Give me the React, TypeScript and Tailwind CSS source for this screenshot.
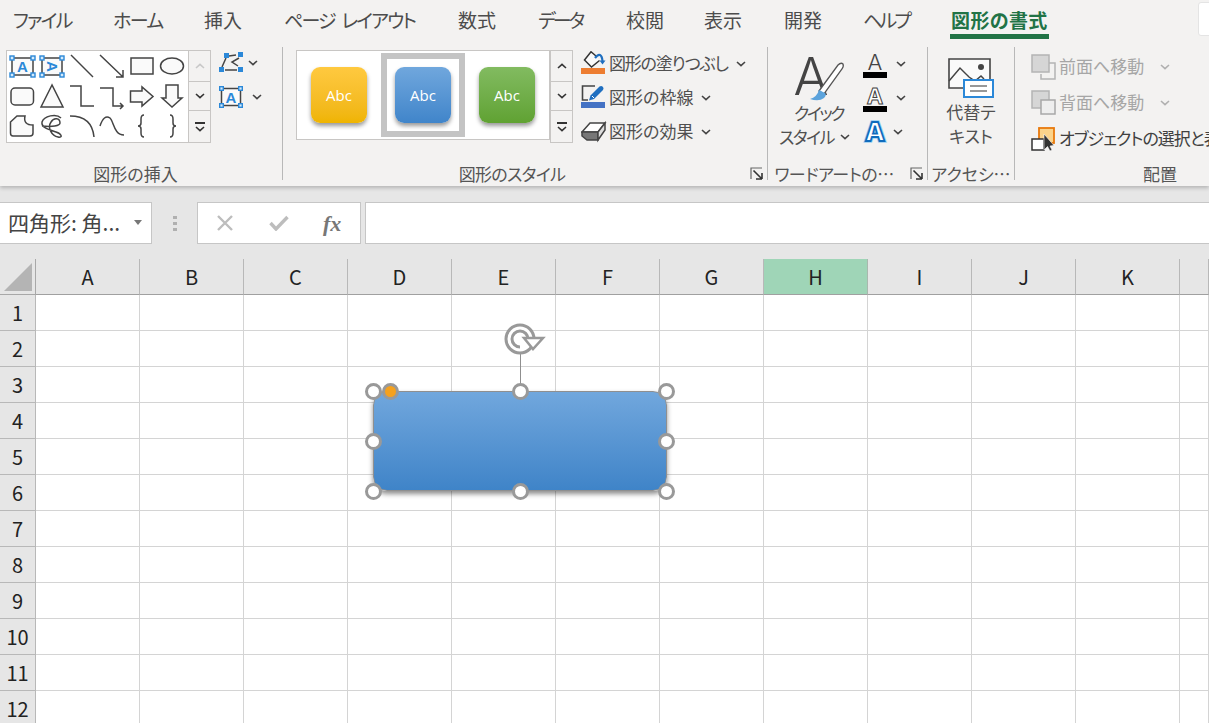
import React from "react";

const JP = "font-['Noto_Sans_CJK_JP','Noto_Sans',sans-serif] [font-feature-settings:'palt']";

const tabs = [
  { t: "ファイル", c: "w-[100px] tracking-[-1.8px]" },
  { t: "ホーム", c: "w-[91px] tracking-[-1.6px]" },
  { t: "挿入", c: "w-[80px]" },
  { t: "ページ レイアウト", c: "w-[174px] tracking-[-1.8px] [word-spacing:4px]" },
  { t: "数式", c: "w-[80px]" },
  { t: "データ", c: "w-[88px] tracking-[-3px]" },
  { t: "校閲", c: "w-[78px]" },
  { t: "表示", c: "w-[80px]" },
  { t: "開発", c: "w-[79px]" },
  { t: "ヘルプ", c: "w-[88px] tracking-[-2.8px]" },
];

function Chev({ c = "#444", className = "" }: { c?: string; className?: string }) {
  return (
    <svg width="10" height="6" viewBox="0 0 10 6" className={className}>
      <path d="M1 1l4 3.6L9 1" fill="none" stroke={c} strokeWidth="1.6" />
    </svg>
  );
}

function ScrollBtns({ dim = false }: { dim?: boolean }) {
  return (
    <div className="flex flex-col w-[23px] h-[93px] shrink-0">
      <div className="h-[32px] border border-[#c8c6c4] flex items-center justify-center">
        <svg width="10" height="6" viewBox="0 0 10 6"><path d="M1 5l4-3.6L9 5" fill="none" stroke={dim ? "#c8c8c8" : "#333"} strokeWidth="1.6" /></svg>
      </div>
      <div className="h-[29px] border border-t-0 border-[#c8c6c4] flex items-center justify-center">
        <Chev c="#333" />
      </div>
      <div className="h-[32px] border border-t-0 border-[#c8c6c4] flex flex-col gap-[2px] items-center justify-center">
        <div className="w-[10px] h-[2px] bg-[#333]" />
        <Chev c="#333" />
      </div>
    </div>
  );
}

function ShapesIcons() {
  const s = { fill: "#fafafa", stroke: "#444", strokeWidth: 1.5 };
  const l = { fill: "none", stroke: "#444", strokeWidth: 1.5 };
  const h = (x: number, y: number) => <rect key={x + "-" + y} x={x - 2} y={y - 2} width="4" height="4" fill="#d6ecfb" stroke="#2b88d8" strokeWidth="1.4" />;
  return (
    <svg width="181" height="91" viewBox="7 51 181 91" className="block">
      <rect x="12" y="58" width="21" height="17" fill="#fafafa" stroke="#444" strokeWidth="1.5" />
      {[h(12, 58), h(33, 58), h(12, 75), h(33, 75)]}
      <text x="22.5" y="72" textAnchor="middle" fontSize="15" fontWeight="700" fill="#2b88d8" fontFamily="Liberation Sans">A</text>
      <rect x="42" y="58" width="20" height="17" fill="#fafafa" stroke="#444" strokeWidth="1.5" />
      {[h(42, 58), h(62, 58), h(42, 75), h(62, 75)]}
      <text x="0" y="0" textAnchor="middle" fontSize="15" fontWeight="700" fill="#2b88d8" fontFamily="Liberation Sans" transform="translate(47 66.5) rotate(90)">A</text>
      <path d="M71 55L93 77" {...l} />
      <path d="M100 55L123 77M123 70v7h-7" {...l} />
      <rect x="131" y="58" width="22" height="16" {...s} />
      <ellipse cx="172" cy="66" rx="11.5" ry="8" {...s} />
      <rect x="11" y="88" width="22.5" height="17" rx="4" {...s} />
      <path d="M52 85L41 107H63Z" {...s} />
      <path d="M70 86H81V106H94" {...l} />
      <path d="M100 88H113V106H123M120 103l3 3-3 3" {...l} />
      <path d="M130.500 91H142V87L153 96.500L142 106V102H130.500Z" {...s} />
      <path d="M166 85H178V98H182L172 107L162 98H166Z" {...s} />
      <path d="M10.500 122L17 116H25Q23 125 33 125V133Q33 136 30 136H13Q10.500 136 10.500 133Z" {...s} />
      <path d="M61 118C56 113 44 116 42 122C41 128 50 130 56 132C62 134 63 138 58 137C52 136 47 128 51 122C54 117 60 118 60 123C60 126 52 127 42 126" {...l} />
      <path d="M70 116Q92 116 94 137" {...l} />
      <path d="M100 126Q104 114 110 118C114 122 114 135 124 135" {...l} />
      <path d="M144 115Q141 115 141 119V123Q141 126 138 126Q141 126 141 129V133Q141 137 144 137" {...l} />
      <path d="M170 115Q173 115 173 119V123Q173 126 176 126Q173 126 173 129V133Q173 137 170 137" {...l} />
    </svg>
  );
}

function Thumb({ c, sel }: { c: string; sel?: boolean }) {
  return (
    <div className={"w-[84px] h-[84px] shrink-0 flex items-center justify-center " + (sel ? "border-[6px] border-[#c4c4c4]" : "border-[6px] border-transparent")}>
      <div className={"w-[56px] h-[56px] rounded-[9px] shadow-[0_3px_4px_rgba(0,0,0,0.4)] flex items-center justify-center text-white text-[15px] font-['Open_Sans',sans-serif] " + c}>
        Abc
      </div>
    </div>
  );
}

function Launcher() {
  return (
    <svg width="13" height="13" viewBox="0 0 13 13" className="block">
      <path d="M1 12V1h11" fill="none" stroke="#666" strokeWidth="1.2" />
      <path d="M12 12H6M12 12V6M12 12L3.500 3.500" fill="none" stroke="#333" strokeWidth="1.6" />
    </svg>
  );
}

function Cmd({ icon, label, dim, tc = "" }: { icon: React.ReactNode; label: string; dim?: boolean; tc?: string }) {
  return (
    <div className="h-[34px] flex items-center">
      <div className="w-[28px] shrink-0">{icon}</div>
      <span className={"text-[17px] leading-[32px] -mt-[2px] whitespace-nowrap " + tc + (dim ? " text-[#a6a6a6]" : " text-[#505050]")}>{label}</span>
      <Chev c={dim ? "#b0b0b0" : "#444"} className={dim ? "ml-[16px] shrink-0" : "ml-[8px] shrink-0"} />
    </div>
  );
}

const PaintIcon = (
  <svg width="26" height="26" viewBox="0 0 26 26" className="block">
    <path d="M15 5L10 0.800L3.500 9L10.500 16L18.500 9.500" fill="#fafafa" stroke="#333" strokeWidth="1.5" />
    <path d="M14 7Q17 3 19 4Q21 5 21.500 10" fill="none" stroke="#1f6fc0" strokeWidth="2.200" />
    <path d="M18.500 9.500h6l-3 4z" fill="#1f6fc0" />
    <rect x="0" y="17" width="24" height="6" fill="#ed7d31" />
  </svg>
);
const PenIcon = (
  <svg width="26" height="26" viewBox="0 0 26 26" className="block">
    <path d="M14 1H1.500V15H7" fill="none" stroke="#444" strokeWidth="1.6" />
    <path d="M8 15.500l1.500-5L18.500 1.500a2.500 2.500 0 0 1 3.500 3.500L13 14z" fill="#1f6fc0" />
    <path d="M11 11l2 2" stroke="#fff" strokeWidth="1" />
    <rect x="0" y="17" width="24" height="6" fill="#4472c4" />
  </svg>
);
const EraserIcon = (
  <svg width="26" height="22" viewBox="0 0 26 22" className="block">
    <path d="M1 11L9 2H24L17 11Z" fill="#fff" stroke="#444" strokeWidth="1.5" />
    <path d="M1 11V15L6 19H17V11H1Z" fill="#777" stroke="#444" strokeWidth="1.5" />
    <path d="M17 11L24 2V9L17 19Z" fill="#ddd" stroke="#444" strokeWidth="1.5" />
  </svg>
);

function Label({ children, launcher }: { children: React.ReactNode; launcher?: boolean }) {
  return (
    <div className="h-[14px] relative flex justify-center text-[17px] leading-[16px] text-[#555] whitespace-nowrap">
      {children}
      {launcher && (
        <div className="absolute right-[4px] top-[1px]">
          <Launcher />
        </div>
      )}
    </div>
  );
}

function Ribbon() {
  return (
    <div className="h-[186px] bg-[#f3f2f1] relative z-10 shadow-[0_2px_4px_rgba(0,0,0,0.22)] overflow-hidden">
      <div className="h-[47px] flex pl-[13px] text-[19px] text-[#4c4c4c] relative">
        {tabs.map((t) => (
          <div key={t.t} className={"h-[40px] leading-[40px] whitespace-nowrap shrink-0 " + t.c}>{t.t}</div>
        ))}
        <div className="h-[39px] leading-[40px] font-bold text-[#217346] border-b-[5px] border-[#217346] whitespace-nowrap tracking-[0.4px] px-[1px] -ml-[1px]">図形の書式</div>
        <div className="absolute left-[1198px] top-[2px] w-[20px] h-[34px] bg-white border border-[#e4e4e4] rounded-[3px]" />
      </div>

      <div className="flex h-[133px]">
        {/* 図形の挿入 */}
        <div className="w-[283px] shrink-0 border-r border-[#b8b8b8] flex flex-col">
          <div className="h-[119px] pl-[6px] pt-[3px] flex">
            <div className="w-[182px] h-[93px] shrink-0 bg-white border border-[#c8c6c4] border-r-0">
              <ShapesIcons />
            </div>
            <ScrollBtns dim />
            <div className="ml-[8px] flex flex-col pt-[2px] gap-[13px]">
              <div className="flex items-center gap-[3px]">
                <svg width="26" height="21" viewBox="0 0 26 21" className="block">
                  <path d="M3 15L7 6M10 4L17 3M20 6L13 10L19 14M6 18H18" fill="none" stroke="#444" strokeWidth="1.500" />
                  {[[0, 15], [5, 1], [19, 0], [19, 15]].map(([x, y]) => (
                    <rect key={x + "-" + y} x={x} y={y} width="5" height="5" fill="#2b88d8" />
                  ))}
                </svg>
                <Chev />
              </div>
              <div className="flex items-center gap-[9px]">
                <svg width="24" height="22" viewBox="0 0 24 22" className="block">
                  <rect x="2.500" y="2.500" width="19" height="17" fill="#fafafa" stroke="#444" strokeWidth="1.500" />
                  <text x="12" y="17" textAnchor="middle" fontSize="15" fontWeight="700" fill="#2b88d8" fontFamily="Liberation Sans">A</text>
                  {[[0, 0], [19, 0], [0, 17], [19, 17]].map(([x, y]) => (
                    <rect key={x + "-" + y} x={x + 0.7} y={y + 0.7} width="3.600" height="3.600" fill="#d6ecfb" stroke="#2b88d8" strokeWidth="1.400" />
                  ))}
                </svg>
                <Chev />
              </div>
            </div>
          </div>
          <Label><span className="pr-[11px]">図形の挿入</span></Label>
        </div>

        {/* 図形のスタイル */}
        <div className="w-[485px] shrink-0 border-r border-[#b8b8b8] flex flex-col">
          <div className="h-[119px] pl-[13px] pt-[3px] flex">
            <div className="w-[254px] h-[90px] shrink-0 bg-white border border-[#c8c6c4] flex items-center overflow-hidden">
              <Thumb c="bg-gradient-to-b from-[#ffc93f] to-[#efb400]" />
              <Thumb c="bg-gradient-to-b from-[#70a7dd] to-[#4085ca]" sel />
              <Thumb c="bg-gradient-to-b from-[#82bb60] to-[#60a232]" />
            </div>
            <ScrollBtns />
            <div className="ml-[8px] -mt-[3px] flex flex-col">
              <Cmd icon={PaintIcon} label="図形の塗りつぶし" tc="tracking-[-1.2px]" />
              <Cmd icon={PenIcon} label="図形の枠線" />
              <Cmd icon={EraserIcon} label="図形の効果" />
            </div>
          </div>
          <Label launcher><span className="pr-[26px] tracking-[-0.7px]">図形のスタイル</span></Label>
        </div>

        {/* ワードアート */}
        <div className="w-[160px] shrink-0 border-r border-[#b8b8b8] flex flex-col">
          <div className="h-[119px] flex">
            <div className="w-[93px] flex flex-col items-center">
              <svg width="56" height="50" viewBox="0 0 56 50" className="block mt-[6px] ml-[7px] overflow-visible">
                <text x="21" y="42" textAnchor="middle" fontSize="52" fontWeight="300" fill="#444" fontFamily="Inter">A</text>
                <path d="M29 38L48 12q3-3 5-1 1 2-1 5L34 41z" fill="#fff" stroke="#555" strokeWidth="1.300" />
                <path d="M29 37q-2 7-9 9 9 3 14-1 3-3 1-5z" fill="#5ba3dc" />
              </svg>
              <div className="text-[17px] leading-[24px] text-[#505050] -mt-[2px] pl-[8px] tracking-[-2.5px] whitespace-nowrap">クイック</div>
              <div className="text-[17px] leading-[24px] text-[#505050] whitespace-nowrap flex items-center gap-[6px]"><span className="tracking-[-1.5px]">スタイル</span><Chev /></div>
            </div>
            <div className="flex flex-col ml-[2px]">
              <div className="h-[34px] flex items-center">
                <svg width="26" height="28" viewBox="0 0 26 28" className="block mt-[2px] overflow-visible">
                  <text x="12" y="19" textAnchor="middle" fontSize="22" fontWeight="300" fill="#444" fontFamily="Inter">A</text>
                  <rect x="0" y="21" width="24" height="6" fill="#000" />
                </svg>
                <Chev className="ml-[7px]" />
              </div>
              <div className="h-[34px] flex items-center">
                <svg width="26" height="28" viewBox="0 0 26 28" className="block mt-[2px] overflow-visible">
                  <text x="12" y="19" textAnchor="middle" fontSize="22" fontWeight="700" fill="#fff" stroke="#444" strokeWidth="1" fontFamily="Inter">A</text>
                  <rect x="0" y="21" width="24" height="6" fill="#000" />
                </svg>
                <Chev className="ml-[7px]" />
              </div>
              <div className="h-[34px] flex items-center">
                <svg width="26" height="26" viewBox="0 0 26 26" className="block overflow-visible">
                  <text x="12" y="22" textAnchor="middle" fontSize="26" fontWeight="800" fill="#fff" stroke="#9fd0f2" strokeWidth="3.500" fontFamily="Inter">A</text>
                  <text x="12" y="22" textAnchor="middle" fontSize="26" fontWeight="800" fill="#fff" stroke="#0f6cbd" strokeWidth="1.800" fontFamily="Inter">A</text>
                </svg>
                <Chev className="ml-[4px]" />
              </div>
            </div>
          </div>
          <Label launcher><span className="pr-[27px] tracking-[-0.5px]">ワードアートの…</span></Label>
        </div>

        {/* アクセシビリティ */}
        <div className="w-[87px] shrink-0 border-r border-[#b8b8b8] flex flex-col">
          <div className="h-[119px] flex flex-col items-center">
            <svg width="46" height="42" viewBox="0 0 46 42" className="block mt-[10px]">
              <path d="M15 31H1V2H42V22" fill="#fafafa" stroke="#444" strokeWidth="1.600" />
              <path d="M1 24L12 11L21 20L27 24L33 19L36 22" fill="none" stroke="#444" strokeWidth="1.500" />
              <circle cx="33" cy="10" r="3" fill="#444" />
              <rect x="16" y="23" width="29" height="17" fill="#fff" stroke="#2b88d8" strokeWidth="2" />
              <path d="M22 29H39M22 34H39" stroke="#777" strokeWidth="1.500" />
            </svg>
            <div className="text-[17px] leading-[24px] text-[#505050] mt-[1px] whitespace-nowrap">代替テ</div>
            <div className="text-[17px] leading-[24px] text-[#505050] whitespace-nowrap">キスト</div>
          </div>
          <Label>アクセシ…</Label>
        </div>

        {/* 配置 */}
        <div className="flex-1 min-w-0 flex flex-col">
          <div className="h-[119px] pl-[16px] pt-[3px] flex flex-col">
            <div className="h-[36px]">
              <Cmd dim label="前面へ移動" icon={
                <svg width="26" height="26" viewBox="0 0 26 26" className="block">
                  <path d="M12 9H24V25H10V20" fill="none" stroke="#b4b4b4" strokeWidth="1.500" />
                  <rect x="1" y="1" width="17" height="17" fill="#d6d6d6" stroke="#b4b4b4" strokeWidth="1.500" />
                </svg>
              } />
            </div>
            <div className="h-[36px]">
              <Cmd dim label="背面へ移動" icon={
                <svg width="26" height="26" viewBox="0 0 26 26" className="block">
                  <rect x="1" y="1" width="17" height="17" fill="#d6d6d6" stroke="#b4b4b4" strokeWidth="1.500" />
                  <rect x="10" y="10" width="14" height="14" fill="#eee" stroke="#a8a8a8" strokeWidth="1.500" />
                </svg>
              } />
            </div>
            <div className="h-[34px] flex items-center">
              <div className="w-[28px] shrink-0">
                <svg width="26" height="26" viewBox="0 0 26 26" className="block">
                  <rect x="8" y="2" width="15" height="15" fill="#fbd38a" stroke="#e8790c" strokeWidth="1.800" />
                  <rect x="1" y="13" width="12" height="11" fill="#fff" stroke="#333" strokeWidth="1.500" />
                  <path d="M13 8L13 24L16.500 20.500L19 25L21 24L19 20L23 19.500Z" fill="#333" stroke="#fff" strokeWidth="0.600" />
                </svg>
              </div>
              <span className="text-[17px] text-[#404040] whitespace-nowrap tracking-[-1px] -mt-[2px]">オブジェクトの選択と表示</span>
            </div>
          </div>
          <div className="h-[14px] text-[17px] leading-[16px] text-[#555] pl-[128px] whitespace-nowrap">配置</div>
        </div>
      </div>
    </div>
  );
}

function FormulaBar() {
  return (
    <div className="h-[73px] bg-[#e6e6e6] pt-[16px] flex items-start">
      <div className="w-[152px] h-[42px] bg-white border border-[#c6c6c6] border-l-0 flex items-center pl-[8px] relative text-[21px] text-[#444] whitespace-nowrap overflow-hidden [font-feature-settings:normal] font-['Noto_Sans_CJK_JP',sans-serif]">
        四角形: 角...
        <svg width="8" height="5" viewBox="0 0 8 5" className="absolute right-[9px] top-[17px]"><path d="M0 0h8L4 5z" fill="#777" /></svg>
      </div>
      <div className="w-[45px] h-[42px] flex flex-col items-center justify-center gap-[3px]">
        <div className="w-[4px] h-[3px] bg-[#b0b0b0]" />
        <div className="w-[4px] h-[3px] bg-[#b0b0b0]" />
        <div className="w-[4px] h-[3px] bg-[#b0b0b0]" />
      </div>
      <div className="w-[164px] h-[42px] bg-white border border-[#c6c6c6] flex items-center relative">
        <svg width="18" height="16" viewBox="0 0 18 16" className="ml-[18px]"><path d="M2 1l14 14M16 1L2 15" stroke="#bdbdbd" strokeWidth="2.400" fill="none" /></svg>
        <svg width="20" height="16" viewBox="0 0 20 16" className="ml-[35px]"><path d="M1.500 8l5.500 6L18.500 2" stroke="#bdbdbd" strokeWidth="3.400" fill="none" /></svg>
        <span className="ml-[34px] text-[22px] italic font-bold text-[#777] font-['Liberation_Serif',serif]">fx</span>
      </div>
      <div className="ml-[4px] flex-1 h-[42px] bg-white border border-[#c6c6c6] border-r-0" />
    </div>
  );
}

const cols = ["A", "B", "C", "D", "E", "F", "G", "H", "I", "J", "K", ""];
const rows = ["1", "2", "3", "4", "5", "6", "7", "8", "9", "10", "11", "12"];

const handles = [
  "left-[365px] top-[124px]",
  "left-[512px] top-[124px]",
  "left-[658px] top-[124px]",
  "left-[365px] top-[174px]",
  "left-[658px] top-[174px]",
  "left-[365px] top-[224px]",
  "left-[512px] top-[224px]",
  "left-[658px] top-[224px]",
];

function Sheet() {
  return (
    <div className="relative flex-1 overflow-hidden bg-white">
      <div className="grid grid-cols-[36px_repeat(11,104px)_1fr] auto-rows-[36px] font-['Noto_Sans_CJK_JP',sans-serif] text-[20px] text-[#222]">
        <div className="bg-[#e6e6e6] border-r border-b border-[#a8a8a8]">
          <svg width="36" height="36" viewBox="0 0 36 36" className="block"><path d="M32 4V32H4Z" fill="#b4b4b4" /></svg>
        </div>
        {cols.map((c, i) => (
          <div key={i} className={"flex items-center justify-center border-b border-[#a0a0a0] border-r " + (c === "H" ? "bg-[#9fd5b7] border-r-[#a9b8ae]" : "bg-[#e6e6e6] border-r-[#b8b8b8]")}>
            {c}
          </div>
        ))}
        {rows.map((r) => (
          <React.Fragment key={r}>
            <div className="bg-[#e6e6e6] border-r border-b border-[#b8b8b8] flex items-center justify-center">{r}</div>
            {cols.map((c, i) => (
              <div key={i} className="border-r border-b border-[#d4d4d4]" />
            ))}
          </React.Fragment>
        ))}
      </div>

      {/* selected shape */}
      <div className="absolute left-[373px] top-[132px] w-[294px] h-[100px] rounded-[14px] border border-[#8f8f8f] bg-gradient-to-b from-[#71a7dd] to-[#3f84c8] shadow-[0_3px_5px_rgba(0,0,0,0.45)]" />
      <div className="absolute left-[520px] top-[95px] w-[1px] h-[37px] bg-[#8f8f8f]" />
      <svg width="42" height="36" viewBox="0 0 42 36" className="absolute left-[504px] top-[63px]">
        <circle cx="16" cy="17" r="14" fill="#fff" stroke="#999" strokeWidth="3" />
        <path d="M24 17A8 8 0 1 0 16 25" fill="none" stroke="#999" strokeWidth="3" />
        <path d="M20 16H39L29 27Z" fill="#fff" stroke="#999" strokeWidth="2.500" />
      </svg>
      {handles.map((h) => (
        <div key={h} className={"absolute w-[17px] h-[17px] rounded-full bg-white border-[3px] border-[#999] " + h} />
      ))}
      <div className="absolute left-[382px] top-[124px] w-[17px] h-[17px] rounded-full bg-[#f5a11e] border-[3px] border-[#999]" />
    </div>
  );
}

export default function App() {
  return (
    <div className={"w-[1209px] h-[723px] overflow-hidden flex flex-col bg-white " + JP}>
      <Ribbon />
      <FormulaBar />
      <Sheet />
    </div>
  );
}
